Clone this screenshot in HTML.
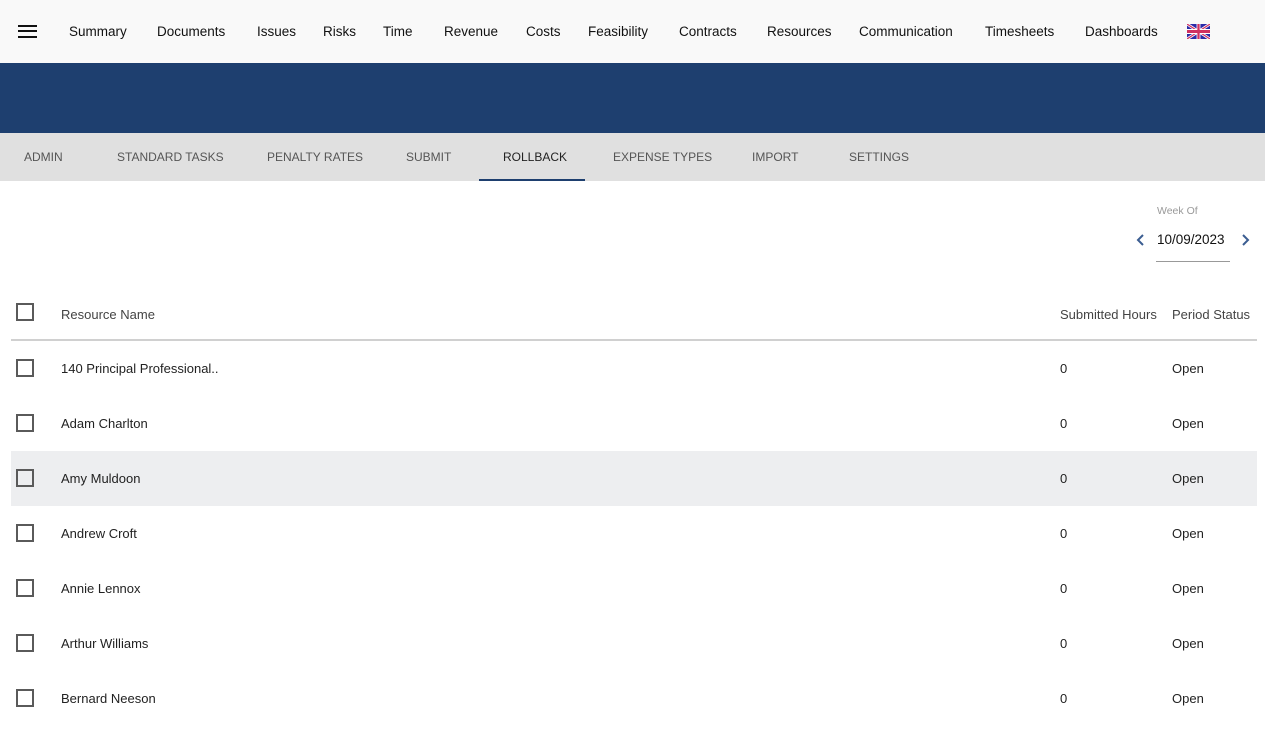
<!DOCTYPE html>
<html><head><style>
*{margin:0;padding:0;box-sizing:border-box}
body{width:1265px;height:739px;overflow:hidden;background:#fff;font-family:"Liberation Sans",sans-serif;position:relative;color:#222}
.a{position:absolute;white-space:nowrap}
.nav{font-size:13.5px;color:#111;top:24px}
.tab{font-size:12px;color:#555;top:150px}
.cb{position:absolute;left:16px;width:18px;height:18px;border:2px solid #5a5a5a;background:transparent}
.t{font-size:13px;color:#222}
</style></head><body>
<div class="a" style="left:0;top:0;width:1265px;height:63px;background:#f9f9f9"></div>
<div class="a" style="left:18px;top:25px;width:19px;height:2px;background:#111"></div>
<div class="a" style="left:18px;top:30px;width:19px;height:2px;background:#111"></div>
<div class="a" style="left:18px;top:36px;width:19px;height:2px;background:#111"></div>
<div class="a nav" style="left:69px">Summary</div>
<div class="a nav" style="left:157px">Documents</div>
<div class="a nav" style="left:257px">Issues</div>
<div class="a nav" style="left:323px">Risks</div>
<div class="a nav" style="left:383px">Time</div>
<div class="a nav" style="left:444px">Revenue</div>
<div class="a nav" style="left:526px">Costs</div>
<div class="a nav" style="left:588px">Feasibility</div>
<div class="a nav" style="left:679px">Contracts</div>
<div class="a nav" style="left:767px">Resources</div>
<div class="a nav" style="left:859px">Communication</div>
<div class="a nav" style="left:985px">Timesheets</div>
<div class="a nav" style="left:1085px">Dashboards</div>
<svg class="a" style="left:1187px;top:24px" width="23" height="15" viewBox="0 0 60 30" preserveAspectRatio="none"><rect width="60" height="30" fill="#2a2aa8"/><path d="M0 0L60 30M60 0L0 30" stroke="#fff" stroke-width="6"/><path d="M0 0L60 30M60 0L0 30" stroke="#d03060" stroke-width="2.5"/><path d="M30 0V30M0 15H60" stroke="#fff" stroke-width="10"/><path d="M30 0V30M0 15H60" stroke="#d03060" stroke-width="6"/></svg>
<div class="a" style="left:0;top:63px;width:1265px;height:70px;background:#1e3f6f"></div>
<div class="a" style="left:0;top:133px;width:1265px;height:48px;background:#e0e0e0"></div>
<div class="a tab" style="left:24px">ADMIN</div>
<div class="a tab" style="left:117px">STANDARD TASKS</div>
<div class="a tab" style="left:267px">PENALTY RATES</div>
<div class="a tab" style="left:406px">SUBMIT</div>
<div class="a tab" style="left:503px;color:#222">ROLLBACK</div>
<div class="a tab" style="left:613px">EXPENSE TYPES</div>
<div class="a tab" style="left:752px">IMPORT</div>
<div class="a tab" style="left:849px">SETTINGS</div>
<div class="a" style="left:479px;top:179px;width:106px;height:2px;background:#1e3f6f"></div>
<div class="a" style="left:1157px;top:205px;font-size:10.5px;color:#999">Week Of</div>
<div class="a" style="left:1157px;top:232px;font-size:13.5px;color:#111">10/09/2023</div>
<div class="a" style="left:1156px;top:261px;width:74px;height:1px;background:#999"></div>
<svg class="a" style="left:1135px;top:233px" width="12" height="14"><path d="M8 2L3 7L8 12" stroke="#3b5d91" stroke-width="2" fill="none"/></svg>
<svg class="a" style="left:1239px;top:233px" width="12" height="14"><path d="M4 2L9 7L4 12" stroke="#3b5d91" stroke-width="2" fill="none"/></svg>
<div class="cb" style="top:303px"></div>
<div class="a t" style="left:61px;top:307px;color:#444">Resource Name</div>
<div class="a t" style="left:1060px;top:307px;color:#444">Submitted Hours</div>
<div class="a t" style="left:1172px;top:307px;color:#444">Period Status</div>
<div class="a" style="left:11px;top:339px;width:1246px;height:2px;background:#d0d0d0"></div>
<div class="a" style="left:11px;top:451px;width:1246px;height:55px;background:#edeef0"></div>

<div class="cb" style="top:359px"></div><div class="a t" style="left:61px;top:361px">140 Principal Professional..</div><div class="a t" style="left:1060px;top:361px">0</div><div class="a t" style="left:1172px;top:361px">Open</div>
<div class="cb" style="top:414px"></div><div class="a t" style="left:61px;top:416px">Adam Charlton</div><div class="a t" style="left:1060px;top:416px">0</div><div class="a t" style="left:1172px;top:416px">Open</div>
<div class="cb" style="top:469px"></div><div class="a t" style="left:61px;top:471px">Amy Muldoon</div><div class="a t" style="left:1060px;top:471px">0</div><div class="a t" style="left:1172px;top:471px">Open</div>
<div class="cb" style="top:524px"></div><div class="a t" style="left:61px;top:526px">Andrew Croft</div><div class="a t" style="left:1060px;top:526px">0</div><div class="a t" style="left:1172px;top:526px">Open</div>
<div class="cb" style="top:579px"></div><div class="a t" style="left:61px;top:581px">Annie Lennox</div><div class="a t" style="left:1060px;top:581px">0</div><div class="a t" style="left:1172px;top:581px">Open</div>
<div class="cb" style="top:634px"></div><div class="a t" style="left:61px;top:636px">Arthur Williams</div><div class="a t" style="left:1060px;top:636px">0</div><div class="a t" style="left:1172px;top:636px">Open</div>
<div class="cb" style="top:689px"></div><div class="a t" style="left:61px;top:691px">Bernard Neeson</div><div class="a t" style="left:1060px;top:691px">0</div><div class="a t" style="left:1172px;top:691px">Open</div>
</body></html>
